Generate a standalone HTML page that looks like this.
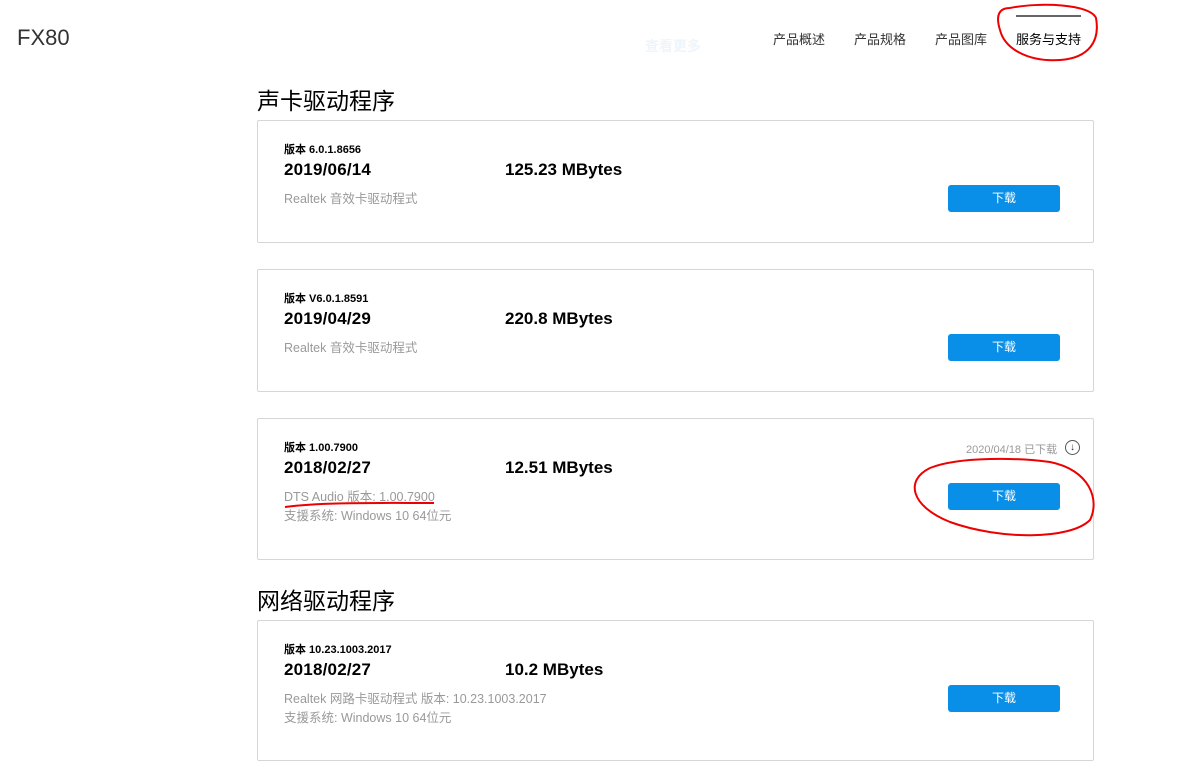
<!DOCTYPE html>
<html><head><meta charset="utf-8"><style>
body{margin:0;width:1192px;height:781px;background:#fff;font-family:"Liberation Sans","Noto Sans CJK SC",sans-serif;position:relative;overflow:hidden;color:#000}
.a{position:absolute;white-space:nowrap}
.card{position:absolute;left:257px;width:835px;border:1px solid #d6d6d6;border-radius:2px;background:#fff}
.v{position:absolute;left:26px;top:20px;font-size:11px;font-weight:bold}
.d{position:absolute;left:26px;top:39px;font-size:17px;font-weight:bold;letter-spacing:0.2px}
.s{position:absolute;left:247px;top:39px;font-size:17px;font-weight:bold}
.g{position:absolute;left:26px;top:69px;font-size:12.5px;color:#999;line-height:19px}
.btn{position:absolute;left:690px;width:112px;height:27px;background:#0a8fe8;border-radius:3px;color:#fff;font-size:12px;text-align:center;line-height:27px}
h2{position:absolute;margin:0;font-size:23px;font-weight:normal;left:257px}
.nav{position:absolute;top:29px;font-size:13px;color:#333}
</style></head><body>
<div class="a" style="left:17px;top:25px;font-size:22px;color:#333">FX80</div>
<div class="a" style="left:645px;top:36px;font-size:14px;color:#eef5fb;font-weight:bold">查看更多</div>
<div class="nav" style="left:773px">产品概述</div>
<div class="nav" style="left:854px">产品规格</div>
<div class="nav" style="left:935px">产品图库</div>
<div class="nav" style="left:1016px;color:#000">服务与支持</div>
<div class="a" style="left:1016px;top:15px;width:65px;height:2px;background:#666"></div>
<h2 style="top:82px">声卡驱动程序</h2>
<div class="card" style="top:120px;height:121px">
<div class="v">版本 6.0.1.8656</div>
<div class="d">2019/06/14</div>
<div class="s">125.23 MBytes</div>
<div class="g">Realtek 音效卡驱动程式</div>
<div class="btn" style="top:64px">下载</div></div>
<div class="card" style="top:269px;height:121px">
<div class="v">版本 V6.0.1.8591</div>
<div class="d">2019/04/29</div>
<div class="s">220.8 MBytes</div>
<div class="g">Realtek 音效卡驱动程式</div>
<div class="btn" style="top:64px">下载</div></div>
<div class="card" style="top:418px;height:140px">
<div class="v">版本 1.00.7900</div>
<div class="d">2018/02/27</div>
<div class="s">12.51 MBytes</div>
<div class="g">DTS Audio 版本: 1.00.7900<br>支援系统: Windows 10 64位元</div>
<div class="a" style="left:708px;top:22px;font-size:11px;color:#999">2020/04/18 已下载</div>
<div class="a" style="left:807px;top:21px;width:13px;height:13px;border:1px solid #555;border-radius:50%;font-size:10px;text-align:center;line-height:13px;color:#333">↓</div>
<div class="btn" style="top:64px">下载</div></div>
<h2 style="top:582px">网络驱动程序</h2>
<div class="card" style="top:620px;height:139px">
<div class="v">版本 10.23.1003.2017</div>
<div class="d">2018/02/27</div>
<div class="s">10.2 MBytes</div>
<div class="g">Realtek 网路卡驱动程式 版本: 10.23.1003.2017<br>支援系统: Windows 10 64位元</div>
<div class="btn" style="top:64px">下载</div></div>
<svg class="a" style="left:0;top:0" width="1192" height="781">
<g fill="none" stroke="#e00" stroke-width="2">
<path d="M1010 8 C1040 2 1090 4 1096 18 C1100 40 1090 58 1060 60 C1030 62 1005 50 1000 30 C995 14 1000 8 1010 8"/>
<path d="M1050 462 C1090 470 1100 500 1090 520 C1070 540 1000 540 950 522 C910 506 905 480 930 468 C960 456 1020 458 1050 462"/>
<path d="M285 507 C320 502 380 503 434 503"/>
</g></svg>
</body></html>
